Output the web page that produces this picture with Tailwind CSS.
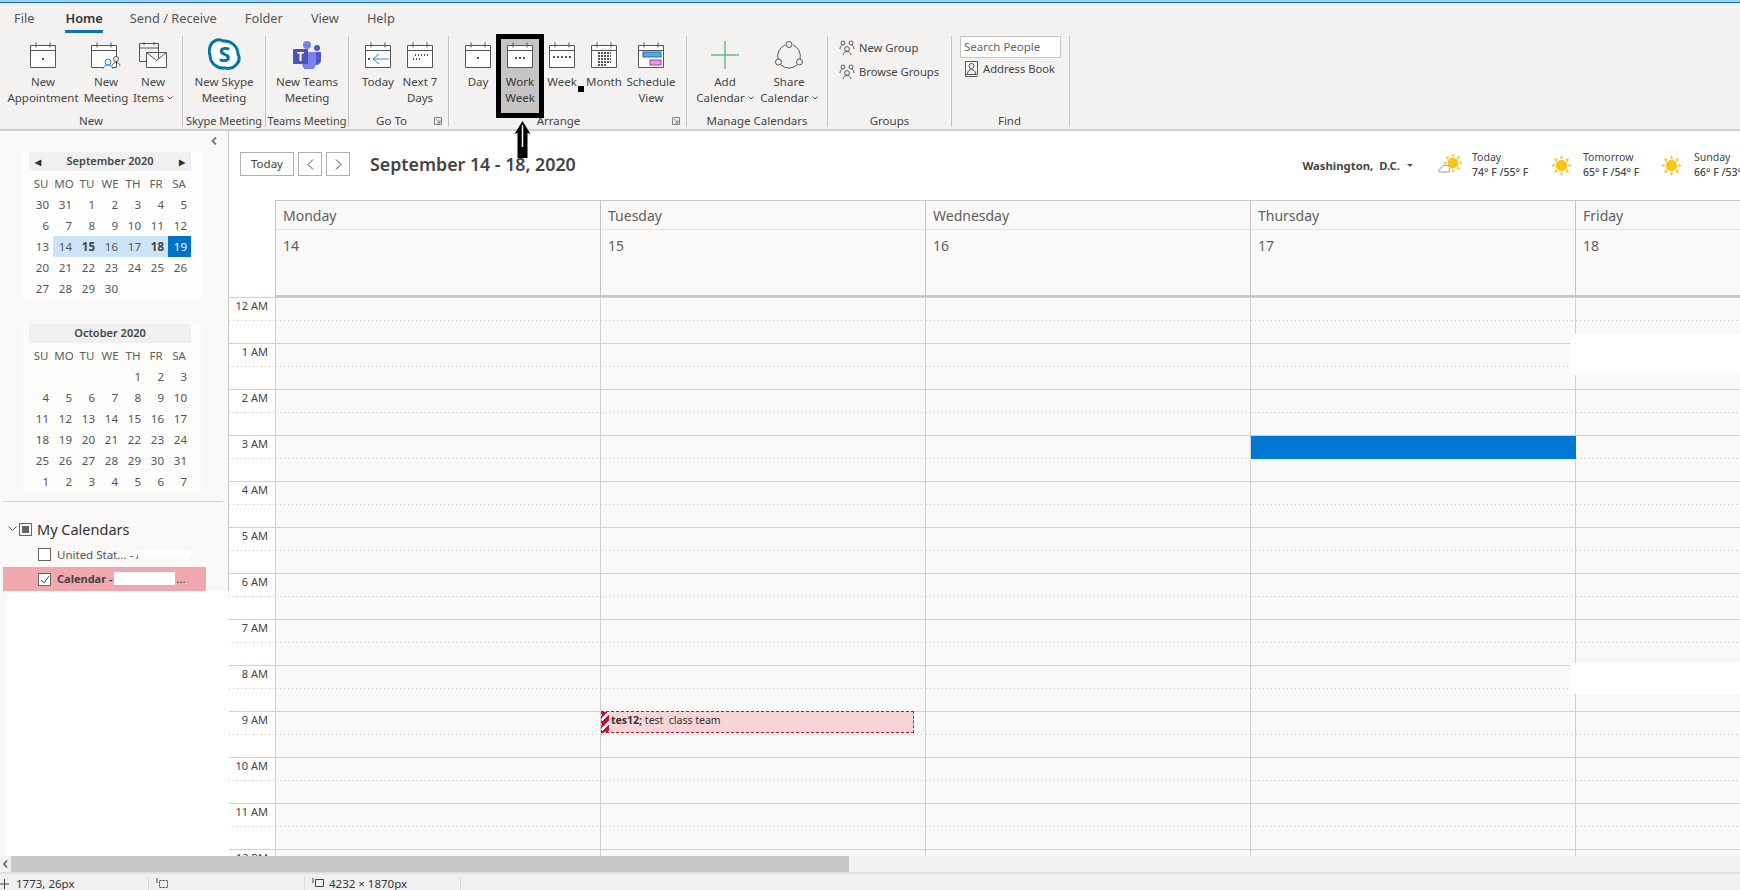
<!DOCTYPE html>
<html lang="en">
  <head>
    <meta charset="UTF-8" />
    <title>Calendar - Outlook</title>
    <script src="https://cdn.jsdelivr.net/npm/@tailwindcss/browser@4"></script>
  </head>
  <body class="h-screen w-full overflow-hidden bg-white font-['Noto_Sans',sans-serif] text-[#444]">
    <svg class="hidden">
      <symbol id="cal" viewBox="0 0 28 28">
        <path d="M1.5 4.5h25v22h-25zM1.5 9.5h25M7 1.5v5M21 1.5v5" fill="#fff" stroke="#555" />
      </symbol>
      <symbol id="people" viewBox="0 0 16 16">
        <g fill="none" stroke="#555">
          <circle cx="4" cy="3" r="2" /><circle cx="12" cy="3" r="2" /><circle cx="8" cy="9" r="2.4" />
          <path d="M1 9c0-2 1-3 2-4M15 9c0-2-1-3-2-4M4 15c0-2 2-3.500 4-3.500s4 1.500 4 3.500" />
        </g>
      </symbol>
      <symbol id="sun" viewBox="0 0 24 24">
        <circle cx="12" cy="12" r="6.500" fill="#fcc419" />
        <path d="M12 0l2 4h-4zM12 24l2-4h-4zM0 12l4-2v4zM24 12l-4-2v4zM3.500 3.500l4.500 1.500-3 3zM20.500 3.500l-4.500 1.500 3 3zM3.500 20.500l4.500-1.500-3-3zM20.500 20.500l-4.500-1.500 3-3z" fill="#fcc419" />
      </symbol>
      <symbol id="drop" viewBox="0 0 6 4"><path d="M.5.500L3 3l2.500-2.500" fill="none" stroke="#555" /></symbol>
    </svg>

    <div class="flex h-[890px] flex-col">
      <!-- top accent line -->
      <div class="h-[3px] shrink-0 border-b border-[#106ebe] bg-[#a9cbec]"></div>

      <!-- ribbon -->
      <div class="h-[128px] shrink-0 border-b-2 border-[#d0cfcd] bg-[#f3f2f1] text-[11.5px] leading-[16px]">
        <div class="flex h-[30px] items-center text-[12.8px] text-[#555]">
          <span class="ml-[14px]">File</span>
          <span class="ml-[31px] flex h-full flex-col items-center justify-center border-b-[3px] border-[#106ebe] pt-[3px] font-semibold text-[#333]">Home</span>
          <span class="ml-[27px]">Send / Receive</span>
          <span class="ml-[28px]">Folder</span>
          <span class="ml-[28px]">View</span>
          <span class="ml-[28px]">Help</span>
        </div>
        <div class="flex h-[94px] pt-[3px] text-center">
          <!-- New -->
          <div class="flex w-[183px] flex-col border-r border-[#c4c3c1]">
            <div class="flex h-[76px] shrink-0">
              <div class="flex w-[86px] flex-col items-center">
                <svg class="mb-[5px] mt-[5px] h-[28px] w-[28px]"><use href="#cal" /><rect x="13" y="17" width="2" height="2" fill="#555" /></svg>
                <span>New<br />Appointment</span>
              </div>
              <div class="flex w-[40px] flex-col items-center">
                <svg class="mb-[5px] mt-[5px] h-[28px] w-[32px] shrink-0">
                  <use href="#cal" width="28" height="28" />
                  <circle cx="18" cy="21" r="3" fill="#f3f2f1" stroke="#2b88d8" /><path d="M13 29c0-3 2-5 5-5s5 2 5 5" fill="#f3f2f1" stroke="#2b88d8" />
                  <circle cx="26" cy="18" r="2.500" fill="#f3f2f1" stroke="#555" /><path d="M22 25c0-2 2-3.500 4-3.500s4 1.500 4 3.500" fill="none" stroke="#555" />
                </svg>
                <span class="whitespace-nowrap">New<br />Meeting</span>
              </div>
              <div class="ml-[4px] flex w-[46px] flex-col items-center">
                <svg class="mb-[5px] mt-[5px] h-[28px] w-[30px]" viewBox="0 0 30 28">
                  <path d="M1.500 2.500h19v18h-19zM1.500 7h19M6 1v3M16 1v3" fill="#f3f2f1" stroke="#555" />
                  <path d="M8.500 11.500h20v15h-20zM8.500 11.500l10 8 10-8" fill="#fff" stroke="#555" />
                </svg>
                <span class="whitespace-nowrap">New<br />Items <svg class="inline h-[4px] w-[6px] align-[2px]"><use href="#drop" /></svg></span>
              </div>
            </div>
            <span class="mt-[1px]">New</span>
          </div>
          <!-- Skype -->
          <div class="flex w-[83px] flex-col border-r border-[#c4c3c1]">
            <div class="flex h-[76px] shrink-0 flex-col items-center">
              <svg class="mb-[3px] mt-[2px] h-[33px] w-[33px]" viewBox="0 0 33 33">
                <path d="M9 2a7 7 0 0 1 6 1c8-1 15 6 15 13 2 4 1 8-2 11-3 3-7 4-11 3-8 1-15-5-15-13-1-2-1-5 0-8 1-4 4-6 7-7z" fill="#fff" stroke="#0078a8" stroke-width="3" />
                <text x="16.500" y="24" text-anchor="middle" font-size="22" font-weight="700" fill="#0078a8" font-family="Noto Sans">S</text>
              </svg>
              <span>New Skype<br />Meeting</span>
            </div>
            <span class="mt-[1px] whitespace-nowrap text-[11px]">Skype Meeting</span>
          </div>
          <!-- Teams -->
          <div class="flex w-[83px] flex-col border-r border-[#c4c3c1]">
            <div class="flex h-[76px] shrink-0 flex-col items-center">
              <svg class="mb-[5px] mt-[4px] h-[29px] w-[30px]" viewBox="0 0 30 29">
                <circle cx="15" cy="5" r="4" fill="#7b83eb" /><circle cx="25" cy="8" r="3" fill="#5059c9" />
                <path d="M20 12h9v8a5 5 0 0 1-9 3z" fill="#5059c9" /><path d="M9 12h15v11a7 7 0 0 1-14 1z" fill="#7b83eb" />
                <rect x="1" y="9" width="15" height="15" rx="1" fill="#4b53bc" />
                <text x="8.500" y="21" text-anchor="middle" font-size="12" font-weight="700" fill="#fff" font-family="Noto Sans">T</text>
              </svg>
              <span>New Teams<br />Meeting</span>
            </div>
            <span class="mt-[1px] whitespace-nowrap text-[11px]">Teams Meeting</span>
          </div>
          <!-- Go To -->
          <div class="relative flex w-[100px] flex-col border-r border-[#c4c3c1]">
            <div class="flex h-[76px] shrink-0 pl-[8px]">
              <div class="flex w-[42px] flex-col items-center">
                <svg class="mb-[5px] mt-[5px] h-[28px] w-[28px]">
                  <use href="#cal" />
                  <path d="M25 18H9M15 13l-6 5 6 5" fill="none" stroke="#2b88d8" /><rect x="4" y="17" width="2" height="2" fill="#555" />
                </svg>
                <span>Today</span>
              </div>
              <div class="flex w-[42px] flex-col items-center">
                <svg class="mb-[5px] mt-[5px] h-[28px] w-[28px]">
                  <use href="#cal" />
                  <path d="M9 14h1M12 14h1M15 14h1M18 14h1M21 14h1M7 18h1M10 18h1M13 18h1" stroke="#555" stroke-width="2" />
                </svg>
                <span>Next 7<br />Days</span>
              </div>
            </div>
            <span class="mt-[1px] pr-[14px]">Go To</span>
            <svg class="absolute bottom-[2px] right-[6px] h-[8px] w-[8px]" viewBox="0 0 8 8"><path d="M.5 7.500v-7h7v7zM2 2l4 4M6 3v3H3" fill="none" stroke="#666" stroke-width=".8" /></svg>
          </div>
          <!-- Arrange -->
          <div class="relative flex w-[238px] flex-col border-r border-[#c4c3c1]">
            <div class="flex h-[76px] shrink-0 pl-[8px]">
              <div class="flex w-[42px] flex-col items-center">
                <svg class="mb-[5px] mt-[5px] h-[28px] w-[28px]"><use href="#cal" /><rect x="13" y="16" width="2" height="2" fill="#555" /></svg>
                <span>Day</span>
              </div>
              <div class="flex h-[80px] w-[42px] flex-col items-center bg-[#c6c5c3] text-[#333]">
                <svg class="mb-[5px] mt-[5px] h-[28px] w-[28px]"><use href="#cal" /><path d="M9 17h2M13 17h2M17 17h2" stroke="#555" stroke-width="2" /></svg>
                <span>Work<br />Week</span>
              </div>
              <div class="flex w-[42px] flex-col items-center">
                <svg class="mb-[5px] mt-[5px] h-[28px] w-[28px]"><use href="#cal" /><path d="M5 16h2M9 16h2M13 16h2M17 16h2M21 16h2" stroke="#555" stroke-width="2" /></svg>
                <span>Week</span>
              </div>
              <div class="flex w-[42px] flex-col items-center">
                <svg class="mb-[5px] mt-[5px] h-[28px] w-[28px]">
                  <use href="#cal" />
                  <path d="M8 12h13M8 15h13M8 18h13M8 21h13M8 24h9" stroke="#555" stroke-width="2" stroke-dasharray="2 1" />
                </svg>
                <span>Month</span>
              </div>
              <div class="flex w-[52px] flex-col items-center">
                <svg class="mb-[5px] mt-[5px] h-[28px] w-[28px]">
                  <use href="#cal" />
                  <rect x="6" y="11" width="18" height="5" fill="#5ba7df" stroke="#106ebe" /><rect x="13" y="19" width="11" height="5" fill="#d8a0dc" stroke="#a13ca8" />
                </svg>
                <span>Schedule<br />View</span>
              </div>
            </div>
            <span class="mt-[1px] pr-[18px]">Arrange</span>
            <svg class="absolute bottom-[2px] right-[6px] h-[8px] w-[8px]" viewBox="0 0 8 8"><path d="M.5 7.500v-7h7v7zM2 2l4 4M6 3v3H3" fill="none" stroke="#666" stroke-width=".8" /></svg>
          </div>
          <!-- Manage Calendars -->
          <div class="flex w-[141px] flex-col border-r border-[#c4c3c1]">
            <div class="flex h-[76px] shrink-0 pl-[6px]">
              <div class="flex w-[64px] flex-col items-center">
                <svg class="mb-[5px] mt-[5px] h-[28px] w-[28px]"><path d="M14 0v28M0 14h28" stroke="#21a453" /></svg>
                <span class="whitespace-nowrap">Add<br />Calendar <svg class="inline h-[4px] w-[6px] align-[2px]"><use href="#drop" /></svg></span>
              </div>
              <div class="flex w-[64px] flex-col items-center">
                <svg class="mb-[5px] mt-[5px] h-[28px] w-[28px]" viewBox="0 0 28 28">
                  <path d="M10 4a12 12 0 0 0-7 14M25 18a12 12 0 0 0-7-14M6 24a12 12 0 0 0 16 0" fill="none" stroke="#555" />
                  <circle cx="14" cy="3.500" r="3" fill="#f3f2f1" stroke="#555" /><circle cx="3.500" cy="21" r="3" fill="#f3f2f1" stroke="#555" /><circle cx="24.500" cy="21" r="3" fill="#f3f2f1" stroke="#555" />
                </svg>
                <span class="whitespace-nowrap">Share<br />Calendar <svg class="inline h-[4px] w-[6px] align-[2px]"><use href="#drop" /></svg></span>
              </div>
            </div>
            <span class="mt-[1px]">Manage Calendars</span>
          </div>
          <!-- Groups -->
          <div class="flex w-[124px] flex-col border-r border-[#c4c3c1]">
            <div class="flex h-[76px] shrink-0 flex-col gap-[8px] pl-[11px] pt-[4px] text-[11.2px]">
              <div class="flex items-center gap-[4px]"><svg class="h-[16px] w-[16px]"><use href="#people" /></svg><span>New Group</span></div>
              <div class="flex items-center gap-[4px]"><svg class="h-[16px] w-[16px]"><use href="#people" /></svg><span>Browse Groups</span></div>
            </div>
            <span class="mt-[1px]">Groups</span>
          </div>
          <!-- Find -->
          <div class="flex w-[118px] flex-col border-r border-[#c4c3c1]">
            <div class="flex h-[76px] shrink-0 flex-col pl-[8px]">
              <div class="flex h-[22px] w-[101px] items-center border border-[#c8c6c4] bg-white pl-[3px] text-[#666]">Search People</div>
              <div class="mt-[3px] flex items-center gap-[5px] pl-[5px] text-[11.2px]">
                <svg class="h-[16px] w-[13px]" viewBox="0 0 13 16"><path d="M.5.5h12v13H.5zM.5 15.500h12M.5 13.500v2" fill="none" stroke="#555" /><circle cx="6.500" cy="5" r="2.500" fill="none" stroke="#555" /><path d="M2.500 13c0-3 2-4.500 4-4.500s4 1.500 4 4.500" fill="none" stroke="#555" /></svg>
                <span>Address Book</span>
              </div>
            </div>
            <span class="mt-[1px] pr-[2px]">Find</span>
          </div>
        </div>
      </div>

      <!-- main -->
      <div class="relative flex min-h-0 flex-1 bg-white">
        <!-- sidebar -->
        <div class="flex w-[229px] shrink-0 flex-col border-r border-[#c8c6c4] bg-[#faf9f8]">
          <div class="flex h-[21px] justify-end pr-[11px] pt-[6px]">
            <svg class="h-[8px] w-[6px]" viewBox="0 0 6 8"><path d="M5 .5L1.500 4 5 7.500" fill="none" stroke="#777" stroke-width="1.800" /></svg>
          </div>
          <div class="ml-[22px] w-[181px] bg-[#fdfdfd] pl-[8px] pr-[12px]" id="miniSep"></div>
          <div class="ml-[22px] mt-[25px] w-[181px] bg-[#fcfcfb] pl-[8px] pr-[12px]" id="miniOct"></div>
          <div class="ml-[3px] mt-[9px] w-[220px] border-t border-[#d2d0ce]"></div>
          <div class="mt-[14px] flex items-center text-[14.5px] leading-[26px] text-[#333]">
            <svg class="ml-[8px] h-[6px] w-[9px]" viewBox="0 0 9 6"><path d="M.5.500l4 4 4-4" fill="none" stroke="#555" /></svg>
            <span class="ml-[2px] flex h-[13px] w-[13px] items-center justify-center border border-[#666]"><span class="h-[7px] w-[7px] bg-[#666]"></span></span>
            <span class="ml-[5px]">My Calendars</span>
          </div>
          <div class="flex h-[25px] items-center pl-[38px] text-[11.5px] text-[#555]">
            <span class="h-[13px] w-[13px] border border-[#666] bg-white"></span>
            <span class="ml-[6px] whitespace-nowrap">United Stat... - A</span>
          </div>
          <div class="ml-[3px] flex h-[24px] w-[203px] items-center bg-[#eea8ae] pl-[35px] text-[11px] font-bold text-[#444]">
            <span class="flex h-[13px] w-[13px] items-center justify-center border border-[#666] bg-white">
              <svg class="h-[9px] w-[10px]" viewBox="0 0 10 9"><path d="M1 5l3 3 5-7" fill="none" stroke="#555" /></svg>
            </span>
            <span class="ml-[6px] whitespace-nowrap">Calendar -</span>
            <span class="ml-[64px] font-normal">...</span>
          </div>
          <div class="-mr-[1px] ml-[7px] flex-1 bg-white"></div>
        </div>

        <!-- calendar -->
        <div class="min-w-0 flex-1 overflow-hidden">
          <div class="flex h-[69px] items-start bg-white pt-[21px]">
            <div class="ml-[11px] flex h-[24px] w-[54px] items-center justify-center border border-[#b3b0ad] text-[11.5px]">Today</div>
            <div class="ml-[4px] flex h-[24px] w-[24px] items-center justify-center border border-[#b3b0ad]">
              <svg class="h-[11px] w-[7px]" viewBox="0 0 7 11"><path d="M6 .5l-5 5 5 5" fill="none" stroke="#444" /></svg>
            </div>
            <div class="ml-[4px] flex h-[24px] w-[24px] items-center justify-center border border-[#b3b0ad]">
              <svg class="h-[11px] w-[7px]" viewBox="0 0 7 11"><path d="M1 .5l5 5-5 5" fill="none" stroke="#444" /></svg>
            </div>
            <h1 class="ml-[20px] whitespace-nowrap text-[17.8px] font-semibold leading-[24px] text-[#444]">September 14 - 18, 2020</h1>
            <div class="-mt-[2px] ml-auto flex h-[30px] items-center whitespace-nowrap text-[10.5px] leading-[15px]">
              <span class="text-[11.3px] font-bold">Washington,&nbsp; D.C.</span>
              <span class="ml-[7px] mr-[24px] border-x-[3px] border-t-[3px] border-x-transparent border-t-[#555]"></span>
              <svg class="h-[22px] w-[25px]" viewBox="0 0 25 22">
                <use href="#sun" x="6" y="-1" width="20" height="20" />
                <path d="M2 18a3 3 0 0 1 2-4 5 5 0 0 1 7-2c2 0 2 3 1 6z" fill="#fff" stroke="#999" />
              </svg>
              <div class="ml-[10px] w-[79px]">Today<br /><span class="font-medium">74° F /55° F</span></div>
              <svg class="h-[21px] w-[21px]"><use href="#sun" /></svg>
              <div class="ml-[11px] w-[78px]">Tomorrow<br /><span class="font-medium">65° F /54° F</span></div>
              <svg class="h-[21px] w-[21px]"><use href="#sun" /></svg>
              <div class="ml-[12px] w-[46px] overflow-hidden">Sunday<br /><span class="font-medium">66° F /53° F</span></div>
            </div>
          </div>

          <div class="grid w-[1520px] grid-cols-[46px_repeat(5,325px)]">
            <div class="h-[97px]"></div>
            <div id="dayHead" class="contents"></div>
          </div>
          <div id="hours" class="grid w-[1520px] grid-cols-[46px_repeat(5,325px)]"></div>
        </div>

        <!-- event and selection sit over the grid -->
        <div class="absolute left-[1251px] top-[305px] h-[23px] w-[325px] bg-[#0078d4]"></div>
        <div class="absolute left-[601px] top-[580px] flex h-[22px] w-[313px] items-center overflow-hidden border border-dashed border-[#c4122f] bg-[#f7d4d8] pb-[2px] text-[10.5px] text-[#333]">
          <span class="-mb-[2px] h-[21px] w-[7px] shrink-0 bg-[repeating-linear-gradient(135deg,#c4122f_0,#c4122f_4px,#fff_4px,#fff_7px)]"></span>
          <span class="ml-[2px]"><b>tes12;</b> test&nbsp; class team</span>
        </div>

        <!-- redacted patches -->
        <div class="absolute left-[138px] top-[419px] h-[9px] w-[52px] bg-white"></div>
        <div class="absolute left-[114px] top-[441px] h-[13px] w-[61px] bg-white"></div>
        <div class="absolute left-[1570px] top-[203px] h-[41px] w-[170px] bg-white"></div>
        <div class="absolute left-[1570px] top-[532px] h-[31px] w-[170px] bg-white"></div>
      </div>

      <!-- scrollbar -->
      <div class="flex h-[16px] shrink-0 items-center bg-[#f1f1f1]">
        <div class="flex h-full w-[11px] items-center justify-center">
          <svg class="h-[8px] w-[5px]" viewBox="0 0 5 8"><path d="M4 .5L1 4l3 3.500" fill="none" stroke="#555" stroke-width="1.500" /></svg>
        </div>
        <div class="h-full w-[838px] bg-[#c8c8c8]"></div>
      </div>

      <!-- status bar -->
      <div class="flex h-[18px] shrink-0 items-center overflow-hidden border-t-2 border-[#e0e0e0] bg-[#f0f0f0] pt-[3px] text-[11.5px] leading-[16px] text-[#333]">
        <div class="flex h-full w-[149px] items-center gap-[7px] border-r border-[#d9d9d9]">
          <svg class="h-[10px] w-[9px]" viewBox="0 0 9 10"><path d="M4.500 0v10M0 5h9" stroke="#444" /></svg>
          <span>1773, 26px</span>
        </div>
        <div class="flex h-full w-[156px] items-center border-r border-[#d9d9d9] pl-[6px]">
          <svg class="h-[12px] w-[14px]" viewBox="0 0 14 12"><path d="M4.500 2.500h8v7h-8z" fill="none" stroke="#444" stroke-dasharray="2 1" /><path d="M2 0v5" stroke="#444" /></svg>
        </div>
        <div class="flex h-full w-[156px] items-center gap-[4px] border-r border-[#d9d9d9] pl-[6px]">
          <svg class="h-[12px] w-[14px]" viewBox="0 0 14 12"><path d="M4.500 1.500h8v7h-8z" fill="none" stroke="#444" /><path d="M2 0v5" stroke="#444" /></svg>
          <span>4232 × 1870px</span>
        </div>
      </div>
    </div>

    <!-- annotation drawn on the screenshot -->
    <div class="absolute left-[496px] top-[34px] h-[84px] w-[48px] border-[5px] border-black"></div>
    <svg class="absolute left-[513px] top-[121px] h-[37px] w-[19px]" viewBox="0 0 19 37">
      <path d="M9.500 0l8 13-3-1v25h-10V12l-3 1z" fill="#000" />
      <path d="M9.500 4v22" stroke="#fff" stroke-width="1.500" />
    </svg>
    <div class="absolute left-[578px] top-[86px] h-[6px] w-[6px] bg-black"></div>

    <script>
      // mini month calendars
      var weekdays = ["SU", "MO", "TU", "WE", "TH", "FR", "SA"];

      function drawMonth(id, title, arrows, days) {
        var html = '<div class="-ml-[1px] flex h-[19px] items-center justify-between bg-[#f0f0f0] px-[6px] text-[11px] font-semibold text-[#444]">';
        html += '<span class="w-[6px] text-[8px] text-[#333]">' + (arrows ? "◀" : "") + "</span><span>" + title + "</span>";
        html += '<span class="w-[6px] text-[8px] text-[#333]">' + (arrows ? "▶" : "") + "</span></div>";
        html += '<div class="mt-[2px] grid grid-cols-[repeat(7,23px)] text-[11.5px] leading-[21px]">';
        weekdays.forEach(function (d) {
          html += '<div class="h-[21px] pr-[1px] text-center text-[#605e5c]">' + d + "</div>";
        });
        days.forEach(function (d) {
          var cls = "h-[21px] pr-[4px] text-right text-[#555]";
          if (d.sel) cls = "h-[21px] pr-[4px] text-right text-[#555] bg-[#cce4f7]";
          if (d.bold) cls = "h-[21px] pr-[4px] text-right font-bold text-[#444] bg-[#cce4f7]";
          if (d.today) cls = "h-[21px] pr-[4px] text-right text-white bg-[#0072c6]";
          html += '<div class="' + cls + '">' + (d.n || "&nbsp;") + "</div>";
        });
        document.getElementById(id).innerHTML = html + "</div>";
      }

      var sep = [30, 31];
      for (var i = 1; i <= 30; i++) sep.push(i);
      sep = sep.map(function (n, idx) {
        var d = { n: n };
        if (idx >= 15 && idx <= 19) d.sel = true;
        if (n == 15 && idx > 2) d.bold = true;
        if (n == 18 && idx > 2) d.bold = true;
        if (n == 19 && idx > 2) d.today = true;
        return d;
      });
      while (sep.length < 35) sep.push({});
      drawMonth("miniSep", "September 2020", true, sep);

      var oct = [{}, {}, {}, {}];
      for (var j = 1; j <= 31; j++) oct.push({ n: j });
      for (var k = 1; k <= 7; k++) oct.push({ n: k });
      drawMonth("miniOct", "October 2020", false, oct);

      // day headers
      var heads = [["Monday", 14], ["Tuesday", 15], ["Wednesday", 16], ["Thursday", 17], ["Friday", 18]];
      document.getElementById("dayHead").innerHTML = heads.map(function (h) {
        return '<div class="h-[97px] border-l border-t border-b-2 border-[#c8c6c4] bg-[#faf9f8] text-[14px] text-[#605e5c]">' +
          '<div class="h-[29px] border-b border-[#e6e4e2] pl-[7px] leading-[29px]">' + h[0] + "</div>" +
          '<div class="pl-[7px] pt-[6px] leading-[20px]">' + h[1] + "</div></div>";
      }).join("");

      // hour rows, half-hour line is a sparse dotted strip
      var dots = "h-px bg-[repeating-linear-gradient(90deg,#c8c6c4_0,#c8c6c4_1px,transparent_1px,transparent_4px)]";
      var labels = ["12 AM", "1 AM", "2 AM", "3 AM", "4 AM", "5 AM", "6 AM", "7 AM", "8 AM", "9 AM", "10 AM", "11 AM", "12 PM"];
      var rows = "";
      labels.forEach(function (label) {
        rows += '<div class="h-[46px] border-t border-[#d2d0ce] bg-white pr-[7px] pt-[1px] text-right text-[11px] leading-[13px] text-[#444]">' +
          label + '<div class="-mr-[7px] mt-[8px] ' + dots + '"></div></div>';
        for (var c = 0; c < 5; c++) {
          rows += '<div class="h-[46px] border-l border-t border-[#d2d0ce] bg-[#faf9f8] pt-[22px]"><div class="' + dots + '"></div></div>';
        }
      });
      document.getElementById("hours").innerHTML = rows;
    </script>
  </body>
</html>
